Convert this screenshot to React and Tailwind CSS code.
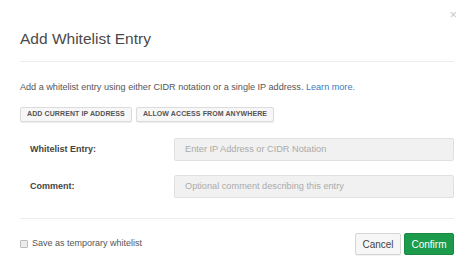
import React from "react";

const App = () => {
  return (
    <div
      className="w-[474px] h-[273px] bg-white text-[#555] overflow-hidden"
      style={{ fontFamily: '"Liberation Sans", Arial, sans-serif' }}
    >
      {/* Header */}
      <div className="relative mx-[20px] pt-[29px] pb-[12px] border-b border-[#ececec]">
        <h2 className="text-[15.5px] leading-[20px] text-[#4a4a4a] font-normal">
          Add Whitelist Entry
        </h2>
        <button className="absolute right-[-3px] top-[8px] text-[#c8c8c8] text-[13px] leading-[13px]">
          ×
        </button>
      </div>

      {/* Body */}
      <div className="mx-[20px] pt-[18px]">
        <p className="text-[9.1px] leading-[14px] text-[#555]">
          Add a whitelist entry using either CIDR notation or a single IP address.{" "}
          <a className="text-[#3b7bbf]">Learn more.</a>
        </p>

        <div className="flex gap-[4px] mt-[13px]">
          <button className="h-[15px] px-[6px] text-[7px] font-bold tracking-[0.1px] text-[#555] bg-[#f7f7f7] border border-[#dcdcdc] rounded-[2px] shadow-[0_1px_1px_rgba(0,0,0,0.08)]">
            ADD CURRENT IP ADDRESS
          </button>
          <button className="h-[15px] px-[6px] text-[7px] font-bold tracking-[0.1px] text-[#555] bg-[#f7f7f7] border border-[#dcdcdc] rounded-[2px] shadow-[0_1px_1px_rgba(0,0,0,0.08)]">
            ALLOW ACCESS FROM ANYWHERE
          </button>
        </div>

        <div className="grid grid-cols-[154px_1fr] gap-y-[14px] items-center mt-[16px] pb-[20px] border-b border-[#ececec]">
          <label className="pl-[10px] text-[9px] font-bold text-[#444]">Whitelist Entry:</label>
          <div className="h-[23px] flex items-center px-[10px] bg-[#f1f1f1] border border-[#e0e0e0] rounded-[2px] text-[9.2px] text-[#ababab]">
            Enter IP Address or CIDR Notation
          </div>
          <label className="pl-[10px] text-[9px] font-bold text-[#444]">Comment:</label>
          <div className="h-[23px] flex items-center px-[10px] bg-[#f1f1f1] border border-[#e0e0e0] rounded-[2px] text-[9.2px] text-[#ababab]">
            Optional comment describing this entry
          </div>
        </div>

        {/* Footer */}
        <div className="flex items-center justify-between mt-[14px]">
          <label className="flex items-center gap-[4px] text-[9px] text-[#555]">
            <span className="w-[8px] h-[8px] border border-[#bdbdbd] bg-[#ececec] rounded-[1px]" />
            Save as temporary whitelist
          </label>
          <div className="flex gap-[3px]">
            <button className="h-[22px] w-[46px] text-[10px] text-[#444] bg-[#f6f6f6] border border-[#d6d6d6] rounded-[2px] shadow-[0_1px_1px_rgba(0,0,0,0.06)]">
              Cancel
            </button>
            <button className="h-[22px] w-[50px] text-[10px] text-white bg-[#1b9b4b] border border-[#178a42] rounded-[2px]">
              Confirm
            </button>
          </div>
        </div>
      </div>
    </div>
  );
};

export default App;
